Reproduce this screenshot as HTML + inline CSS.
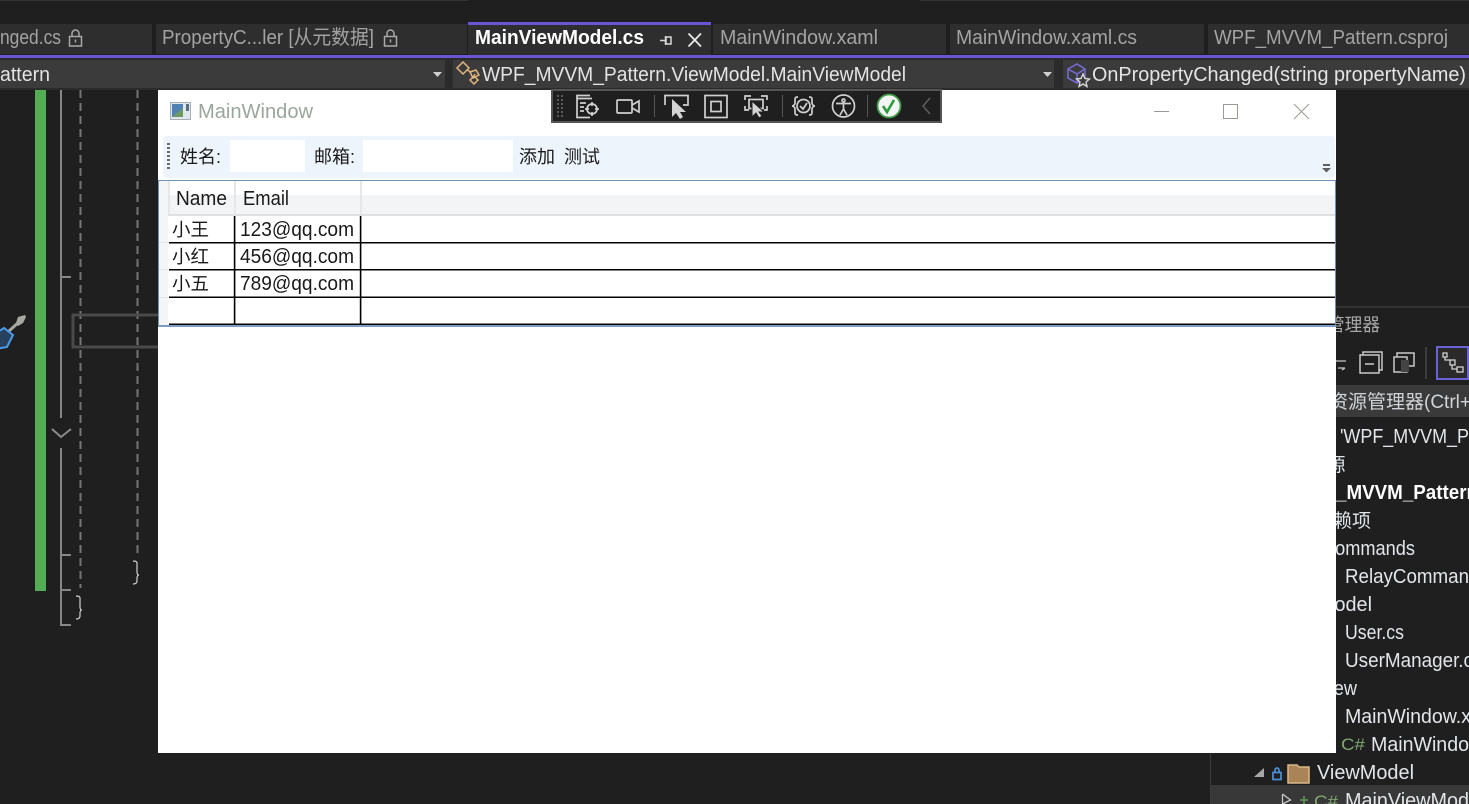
<!DOCTYPE html>
<html lang="zh"><head><meta charset="utf-8"><title>MainWindow</title>
<style>
html,body{margin:0;padding:0;background:#1f1f1f;overflow:hidden;width:1469px;height:804px}
svg{display:block}
text{font-family:"Liberation Sans","Noto Sans CJK SC",sans-serif;white-space:pre}
.tab{font-size:20px;fill:#a3a3a3}
.nav{font-size:20px;fill:#e4e4e4}
.tree{font-size:20px;fill:#e2e6ea}
.cell{font-size:20px;fill:#1a1a1a}
.ic{fill:none;stroke:#d0d0d0;stroke-width:1.7}
</style></head><body>
<svg width="1469" height="804" viewBox="0 0 1469 804" xmlns="http://www.w3.org/2000/svg">
<defs><clipPath id="cp"><rect x="1336" y="300" width="133" height="453"/></clipPath></defs>
<rect width="1469" height="804" fill="#1f1f1f"/>
<rect x="0" y="0" width="468" height="1" fill="#333"/>
<rect x="920" y="0" width="549" height="1" fill="#333"/>

<!-- tabs -->
<rect x="0" y="24" width="152" height="30" fill="#2e2e2e"/>
<rect x="156" y="24" width="311" height="30" fill="#2e2e2e"/>
<rect x="468" y="25" width="243" height="30" fill="#2e2e2e"/>
<rect x="468" y="22" width="243" height="3" fill="#6c54d6"/>
<rect x="713" y="24" width="233" height="30" fill="#2e2e2e"/>
<rect x="950" y="24" width="254" height="30" fill="#2e2e2e"/>
<rect x="1208" y="24" width="261" height="30" fill="#2e2e2e"/>
<rect x="0" y="55" width="1469" height="3" fill="#6c54d6"/>

<text class="tab" x="0" y="44" textLength="61" lengthAdjust="spacingAndGlyphs">nged.cs</text>
<g fill="none" stroke="#a8a8a8" stroke-width="1.5"><rect x="69.500" y="36.500" width="12" height="9.500"/><path d="M72 36V33.500a3.500 3.500 0 0 1 7 0V36M75.500 39.500v3"/></g>
<text class="tab" x="162" y="44" textLength="212" lengthAdjust="spacingAndGlyphs">PropertyC...ler [从元数据]</text>
<g fill="none" stroke="#a8a8a8" stroke-width="1.5"><rect x="384.500" y="36.500" width="12" height="9.500"/><path d="M387 36V33.500a3.500 3.500 0 0 1 7 0V36M390.500 39.500v3"/></g>
<text x="475" y="44" font-size="20" font-weight="700" fill="#fff" textLength="169" lengthAdjust="spacingAndGlyphs">MainViewModel.cs</text>
<g fill="none" stroke="#d8d8d8" stroke-width="1.5"><path d="M660 40.500h5M665.500 36v9"/><rect x="666" y="37" width="5" height="7"/></g>
<path d="M688.500 33.500L701 46.500M701 33.500L688.500 46.500" stroke="#e8e8e8" stroke-width="1.800" fill="none"/>
<text class="tab" x="720" y="44" textLength="158" lengthAdjust="spacingAndGlyphs">MainWindow.xaml</text>
<text class="tab" x="956" y="44" textLength="181" lengthAdjust="spacingAndGlyphs">MainWindow.xaml.cs</text>
<text class="tab" x="1214" y="44" textLength="234" lengthAdjust="spacingAndGlyphs">WPF_MVVM_Pattern.csproj</text>

<!-- nav bar -->
<rect x="0" y="58" width="1469" height="32" fill="#2b2b2b"/>
<rect x="0" y="60" width="445" height="28" fill="#3b3b3b"/>
<rect x="453" y="60" width="601" height="28" fill="#3b3b3b"/>
<rect x="1063" y="60" width="406" height="28" fill="#3b3b3b"/>
<text class="nav" x="0" y="81" textLength="50" lengthAdjust="spacingAndGlyphs">attern</text>
<path d="M433 72h9l-4.500 5z" fill="#d0d0d0"/>
<g fill="none" stroke="#e0b77e" stroke-width="1.500">
<path d="M457 68l6-6 6 6-6 6z"/><path d="M470 72l6-2 3 5-6 3z"/><path d="M470 80l4-4 4 4-4 4z"/><path d="M467 70l4 2M475 74l-1 2"/>
</g>
<text class="nav" x="482" y="81" textLength="424" lengthAdjust="spacingAndGlyphs">WPF_MVVM_Pattern.ViewModel.MainViewModel</text>
<path d="M1043 72h9l-4.500 5z" fill="#d0d0d0"/>
<g fill="none" stroke="#7a6cd8" stroke-width="1.500"><path d="M1068 69l9-5 8 5v9l-8 5-9-5zM1068 69l9 5 8-5M1077 74v9"/></g>
<path d="M1083 74l2 4.500 4.500.5-3.500 3 1 4.500-4-2.500-4 2.500 1-4.500-3.500-3 4.500-.5z" fill="#3b3b3b" stroke="#d8d8d8" stroke-width="1.400"/>
<text class="nav" x="1092" y="81" textLength="374" lengthAdjust="spacingAndGlyphs">OnPropertyChanged(string propertyName)</text>

<!-- editor left -->
<rect x="35" y="90" width="11" height="501" fill="#53ad55"/>
<rect x="60" y="90" width="2" height="328" fill="#868686"/>
<rect x="60" y="276" width="11" height="2" fill="#868686"/>
<path d="M52 429l9 8 10-8" fill="none" stroke="#8a8a8a" stroke-width="2"/>
<path d="M61 448V625H71M61 555H71M61 590H71" fill="none" stroke="#868686" stroke-width="2"/>
<path d="M80.500 90V588" stroke="#747474" stroke-width="2" stroke-dasharray="8 5" fill="none"/>
<path d="M137.500 90V555" stroke="#747474" stroke-width="2" stroke-dasharray="8 5" fill="none"/>
<path d="M133 561c5 0 4 2 4 5v6c0 2 1 3 2 3-1 0-2 1-2 3v3c0 2-1 3-4 3" fill="none" stroke="#d2d2d2" stroke-width="1.200"/>
<path d="M76 596c5 0 4 2 4 5v6c0 2 1 3 2 3-1 0-2 1-2 3v3c0 2-1 3-4 3" fill="none" stroke="#d2d2d2" stroke-width="1.200"/>
<rect x="73" y="315" width="90" height="32" fill="none" stroke="#4a4a4a" stroke-width="3"/>
<!-- screwdriver -->
<path d="M9 331L19 322" stroke="#a8a8a0" stroke-width="3"/>
<path d="M16 323l2-6 7-2 1 2-3 6-5 3z" fill="#a8a8a0"/>
<path d="M-4 333L4 328l9 7-6 12-11 2z" fill="#27415f" stroke="#4a9ae6" stroke-width="2"/>

<!-- solution explorer (drawn beneath the window) -->
<rect x="1336" y="306" width="133" height="2" fill="#333"/>
<rect x="1336" y="385" width="133" height="32" fill="#3a3a3a"/>
<g clip-path="url(#cp)">
<text x="1327" y="331" font-size="18" fill="#a8a8a8" textLength="53" lengthAdjust="spacingAndGlyphs">管理器</text>
<text class="tree" x="1329" y="408" style="font-size:19px;fill:#d0d4d8" textLength="142" lengthAdjust="spacingAndGlyphs">资源管理器(Ctrl+</text>
<text class="tree" x="1340" y="443" textLength="129" lengthAdjust="spacingAndGlyphs">'WPF_MVVM_P</text>
<text class="tree" x="1326.500" y="471" style="font-size:19px">源</text>
<text class="tree" x="1336" y="499" font-weight="700" style="fill:#fff" textLength="142" lengthAdjust="spacingAndGlyphs">_MVVM_Pattern</text>
<text class="tree" x="1333" y="527" style="font-size:19px" textLength="38" lengthAdjust="spacingAndGlyphs">赖项</text>
<text class="tree" x="1322" y="555" textLength="93" lengthAdjust="spacingAndGlyphs">Commands</text>
<text class="tree" x="1345" y="583" textLength="124" lengthAdjust="spacingAndGlyphs">RelayComman</text>
<text class="tree" x="1318" y="611" textLength="54" lengthAdjust="spacingAndGlyphs">Model</text>
<text class="tree" x="1345" y="639" textLength="59" lengthAdjust="spacingAndGlyphs">User.cs</text>
<text class="tree" x="1345" y="667" textLength="128" lengthAdjust="spacingAndGlyphs">UserManager.c</text>
<text class="tree" x="1318" y="695" textLength="39" lengthAdjust="spacingAndGlyphs">View</text>
<text class="tree" x="1345" y="723" textLength="126" lengthAdjust="spacingAndGlyphs">MainWindow.x</text>
<text x="1341" y="750" font-size="17" fill="#7fa870" textLength="24" lengthAdjust="spacingAndGlyphs">C#</text>
<text class="tree" x="1371" y="751" textLength="98" lengthAdjust="spacingAndGlyphs">MainWindo</text>
</g>
<path d="M1336 361h10M1338 368h7M1345 368l-3 2" fill="none" stroke="#c8c8c8" stroke-width="1.300"/>
<g fill="none" stroke="#c8c8c8" stroke-width="1.500">
<rect x="1360" y="355" width="19" height="18"/><path d="M1363 355v-3h19v18h-3M1365 364h9"/>
<rect x="1394" y="357" width="13" height="15"/><path d="M1397 357v-4h17v13h-7"/><rect x="1401" y="360" width="8" height="12" fill="#444" stroke="none"/>
</g>
<rect x="1425" y="347" width="2" height="32" fill="#3c3c3c"/>
<rect x="1437" y="347" width="31" height="32" fill="#2a2a2a" stroke="#6c62d8" stroke-width="2"/>
<g fill="none" stroke="#d0d0d0" stroke-width="1.300"><rect x="1443" y="353" width="4" height="4"/><rect x="1450" y="360" width="5" height="5"/><rect x="1457" y="367" width="6" height="5"/><path d="M1445 357v3h5M1452 365v4h5"/></g>

<rect x="1210" y="753" width="1" height="51" fill="#3c3c3c"/>
<path d="M1254 777l10-9v9z" fill="#a8a8a8"/>
<g fill="none" stroke="#4a90d9" stroke-width="1.700"><rect x="1273" y="772.500" width="8" height="7"/><path d="M1275 772v-2a2 2 0 0 1 4 0v2"/></g>
<path d="M1288 765h9l2 2h10v16h-21z" fill="#a98458" stroke="#dcb988" stroke-width="1.500"/>
<text class="tree" x="1317" y="779" textLength="97" lengthAdjust="spacingAndGlyphs">ViewModel</text>
<rect x="1211" y="785" width="258" height="19" fill="#383838"/>
<path d="M1282.500 794v10M1282.500 794l8 6-8 4" fill="none" stroke="#c8c8c8" stroke-width="1.300"/>
<path d="M1300 800h8M1304 796v8" stroke="#5f9a58" stroke-width="1.500" fill="none"/>
<text x="1314" y="807" font-size="17" fill="#7fa870" textLength="24" lengthAdjust="spacingAndGlyphs">C#</text>
<text class="tree" x="1345" y="807" textLength="124" lengthAdjust="spacingAndGlyphs">MainViewMod</text>

<!-- app window -->
<rect x="158" y="90" width="1178" height="663" fill="#fff"/>
<rect x="170.500" y="102.500" width="20" height="17" fill="#dfe6ec" stroke="#a8b0b6"/>
<rect x="172" y="104" width="11" height="13" fill="#4f81b5"/>
<path d="M172 117l11-9v9z" fill="#6f9a63"/>
<rect x="186" y="104" width="3" height="7" fill="#5a6d80"/>
<text x="198" y="118" font-size="20" fill="#9aa69c" textLength="115" lengthAdjust="spacingAndGlyphs">MainWindow</text>
<rect x="1154" y="111" width="15" height="1" fill="#9a9a94"/>
<rect x="1223.500" y="104.500" width="14" height="14" fill="none" stroke="#9a9a94"/>
<path d="M1294 104l15 15M1309 104l-15 15" stroke="#9a9a94" fill="none"/>

<!-- diagnostic toolbar -->
<rect x="552" y="90" width="389" height="32" fill="#1f1f1f" stroke="#555" stroke-width="2"/>
<g fill="#5a5a5a"><rect x="557" y="95" width="2" height="2"/><rect x="561" y="95" width="2" height="2"/><rect x="557" y="99" width="2" height="2"/><rect x="561" y="99" width="2" height="2"/><rect x="557" y="103" width="2" height="2"/><rect x="561" y="103" width="2" height="2"/><rect x="557" y="107" width="2" height="2"/><rect x="561" y="107" width="2" height="2"/><rect x="557" y="111" width="2" height="2"/><rect x="561" y="111" width="2" height="2"/><rect x="557" y="115" width="2" height="2"/><rect x="561" y="115" width="2" height="2"/></g>
<g class="ic">
<path d="M590 95.500h-13v22h13M577 98.500h15M580 103h6M580 107h4M580 111h4" fill="none"/>
<circle cx="592" cy="109" r="5"/><path d="M592 102v4M592 112v4M585 109h4M595 109h4"/>
<rect x="617" y="100" width="15" height="13" rx="1"/><path d="M632 105l7-4v11l-7-4"/>
<path d="M665 105V95.500h23V105h-5"/>
<rect x="705" y="95.500" width="22" height="22"/><rect x="711" y="101.500" width="10" height="10"/>
<path d="M745 100v-4h6M761 96h6v4M745 106v4h4M767 106v4h-3"/><rect x="749" y="99.500" width="14" height="9"/>
<path d="M798 97c-3 0-3 1-3 3v3c0 2-2 3-3 3 1 0 3 1 3 3v3c0 2 0 3 3 3M809 97c3 0 3 1 3 3v3c0 2 2 3 3 3-1 0-3 1-3 3v3c0 2 0 3-3 3"/>
<circle cx="803.500" cy="106" r="6.500"/><path d="M800 106l3 3 4-6"/>
<circle cx="843.500" cy="106" r="11"/>
<circle cx="843.500" cy="100.500" r="1.500"/><path d="M836 103.500h15M843.500 104v5M843.500 109l-3.500 6M843.500 109l3.500 6"/>
</g>
<path d="M672 99l0 18 4-4 4 6 3-2-3-5h6z" fill="#d4d4d4"/>
<path d="M752 101l0 16 4-4 3 5 3-2-3-4h5z" fill="#d4d4d4" stroke="#1f1f1f"/>
<rect x="654" y="95" width="1" height="22" fill="#555"/>
<rect x="782" y="95" width="1" height="22" fill="#555"/>
<rect x="867" y="95" width="1" height="22" fill="#555"/>
<circle cx="889" cy="106" r="11.500" fill="#f4f4f4" stroke="#3f9b46" stroke-width="1.800"/>
<path d="M883 106l4 6 7-12" fill="none" stroke="#2e9b3c" stroke-width="2.600"/>
<path d="M930 98l-7 8 7 8" fill="none" stroke="#5f5f5f" stroke-width="1.500"/>

<!-- wpf toolbar -->
<rect x="163" y="136" width="1172" height="42" rx="4" fill="#edf4fc"/>
<g fill="#6a6a6a"><rect x="167" y="143" width="3" height="2"/><rect x="167" y="147" width="3" height="2"/><rect x="167" y="151" width="3" height="2"/><rect x="167" y="155" width="3" height="2"/><rect x="167" y="159" width="3" height="2"/><rect x="167" y="163" width="3" height="2"/><rect x="167" y="167" width="3" height="2"/></g>
<text class="cell" x="180" y="163" style="font-size:18px" textLength="41" lengthAdjust="spacingAndGlyphs">姓名:</text>
<rect x="230" y="140" width="75" height="32" fill="#fff"/>
<text class="cell" x="314" y="163" style="font-size:18px" textLength="41" lengthAdjust="spacingAndGlyphs">邮箱:</text>
<rect x="363" y="140" width="150" height="32" fill="#fff"/>
<text class="cell" x="519" y="163" style="font-size:18px" textLength="36" lengthAdjust="spacingAndGlyphs">添加</text>
<text class="cell" x="564" y="163" style="font-size:18px" textLength="36" lengthAdjust="spacingAndGlyphs">测试</text>
<rect x="1323" y="164" width="7" height="2" fill="#606060"/>
<path d="M1322 168h9l-4.500 4.500z" fill="#606060"/>

<!-- datagrid -->
<rect x="158.500" y="180" width="1177" height="146" fill="#fff"/>
<rect x="159" y="195" width="1176" height="20" fill="#f3f4f5"/>
<rect x="159" y="181" width="9" height="144" fill="#f4f5f6"/>
<rect x="168" y="214" width="1167" height="2" fill="#dfe0e1"/>
<rect x="168" y="181" width="2" height="34" fill="#e6e7e8"/>
<rect x="234" y="181" width="2" height="34" fill="#e6e7e8"/>
<rect x="360" y="181" width="2" height="34" fill="#e6e7e8"/>
<g fill="#e3e4e5"><rect x="159" y="242" width="9" height="1"/><rect x="159" y="269" width="9" height="1"/><rect x="159" y="297" width="9" height="1"/></g>
<text class="cell" x="176" y="205" textLength="51" lengthAdjust="spacingAndGlyphs">Name</text>
<text class="cell" x="243" y="205" textLength="46" lengthAdjust="spacingAndGlyphs">Email</text>
<g fill="#000">
<rect x="169" y="242" width="1167" height="1.500"/>
<rect x="169" y="269" width="1167" height="1.500"/>
<rect x="169" y="296.500" width="1167" height="1.500"/>
<rect x="169" y="323.500" width="1167" height="1.500"/>
<rect x="233.800" y="216" width="1.600" height="108"/>
<rect x="359.800" y="216" width="1.600" height="108"/>
</g>
<text class="cell" x="172" y="236" style="font-size:18px" textLength="37" lengthAdjust="spacingAndGlyphs">小王</text>
<text class="cell" x="240" y="236" textLength="114" lengthAdjust="spacingAndGlyphs">123@qq.com</text>
<text class="cell" x="172" y="263" style="font-size:18px" textLength="37" lengthAdjust="spacingAndGlyphs">小红</text>
<text class="cell" x="240" y="263" textLength="114" lengthAdjust="spacingAndGlyphs">456@qq.com</text>
<text class="cell" x="172" y="290" style="font-size:18px" textLength="37" lengthAdjust="spacingAndGlyphs">小五</text>
<text class="cell" x="240" y="290" textLength="114" lengthAdjust="spacingAndGlyphs">789@qq.com</text>
<path d="M158.500 326V180.500H1335.500V326" fill="none" stroke="#7191b5"/>
<rect x="158" y="325" width="1178" height="2" fill="#7d9cc0"/>
</svg>
</body></html>
